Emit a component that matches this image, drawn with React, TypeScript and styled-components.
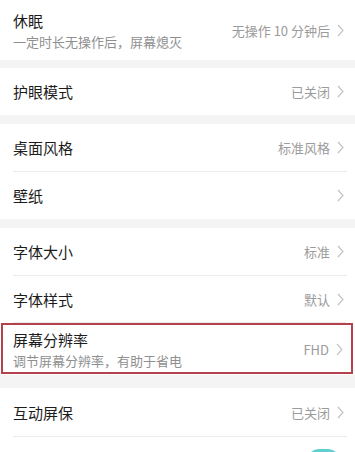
import React from 'react'
import styled, { createGlobalStyle } from 'styled-components'

//-----------------------------------------------------------------------------
// Global
//-----------------------------------------------------------------------------
const GlobalStyle = createGlobalStyle`
  html, body {
    margin: 0;
    padding: 0;
    background: #f4f4f4;
    font-family: "Noto Sans CJK SC", "Noto Sans", "Liberation Sans", sans-serif;
    -webkit-font-smoothing: antialiased;
  }
  body {
    height: 452px;
    overflow: hidden;
  }
`

//-----------------------------------------------------------------------------
// Data
//-----------------------------------------------------------------------------
interface IItem {
  title: string
  subtitle?: string
  value?: string
  highlighted?: boolean
  toggle?: boolean
  height?: number
}

const groups: IItem[][] = [
  [{ title: '休眠', subtitle: '一定时长无操作后，屏幕熄灭', value: '无操作 10 分钟后', height: 60 }],
  [{ title: '护眼模式', value: '已关闭' }],
  [{ title: '桌面风格', value: '标准风格' }, { title: '壁纸' }],
  [
    { title: '字体大小', value: '标准' },
    { title: '字体样式', value: '默认' },
    { title: '屏幕分辨率', subtitle: '调节屏幕分辨率，有助于省电', value: 'FHD', highlighted: true, height: 52 }
  ],
  [{ title: '互动屏保', value: '已关闭', height: 48 }, { title: '智能分辨率', toggle: true }]
]

//-----------------------------------------------------------------------------
// Components
//-----------------------------------------------------------------------------
const Chevron = () => (
  <svg width="7" height="13" viewBox="0 0 7 13">
    <polyline points="1,1 6,6.5 1,12" fill="none" stroke="#c4c4c4" strokeWidth="1.2" />
  </svg>
)

const SettingsItem = ({ item, divider }: { item: IItem, divider: boolean }) => (
  <Item $highlighted={!!item.highlighted}>
    <Inner $divider={divider} $height={item.height || 47}>
      <Texts>
        <Title>{item.title}</Title>
        {item.subtitle && <Subtitle>{item.subtitle}</Subtitle>}
      </Texts>
      {item.toggle ? (
        <Toggle />
      ) : (
        <Right>
          {item.value && <Value>{item.value}</Value>}
          <Chevron />
        </Right>
      )}
    </Inner>
  </Item>
)

const App = () => (
  <>
    <GlobalStyle />
    <Page>
      {groups.map((group, gi) => (
        <Group key={gi}>
          {group.map((item, ii) => (
            <SettingsItem key={item.title} item={item} divider={ii > 0} />
          ))}
        </Group>
      ))}
    </Page>
  </>
)

//-----------------------------------------------------------------------------
// Styled Components
//-----------------------------------------------------------------------------
const Page = styled.div`
  width: 355px;
  display: flex;
  flex-direction: column;
  gap: 9px;
`

const Group = styled.div`
  background: #ffffff;
  display: flex;
  flex-direction: column;
  &:first-child {
    margin-bottom: -1px;
  }
  &:last-child {
    margin-top: 4px;
  }
`

const Item = styled.div<{ $highlighted: boolean }>`
  outline: ${p => (p.$highlighted ? '2.5px solid #b3424c' : 'none')};
  outline-offset: -3px;
  margin: ${p => (p.$highlighted ? '-1px 1px 0 0' : '0')};
`

const Inner = styled.div<{ $divider: boolean, $height: number }>`
  height: ${p => p.$height}px;
  margin: 0 8px 0 13px;
  padding-right: 3px;
  border-top: ${p => (p.$divider ? '1px solid #ececec' : 'none')};
  display: flex;
  align-items: center;
  justify-content: space-between;
`

const Texts = styled.div`
  display: flex;
  flex-direction: column;
  gap: 3px;
`

const Title = styled.div`
  font-size: 15px;
  line-height: 19px;
  color: #1c1c1c;
`

const Subtitle = styled.div`
  font-size: 13px;
  line-height: 17px;
  color: #8f8f8f;
`

const Right = styled.div`
  display: flex;
  align-items: center;
  gap: 7px;
`

const Value = styled.div`
  font-size: 13px;
  color: #9b9b9b;
`

const Toggle = styled.div`
  width: 33px;
  height: 24px;
  margin-right: 4px;
  border-radius: 12px;
  background: #5fcfd0;
`

export default App
